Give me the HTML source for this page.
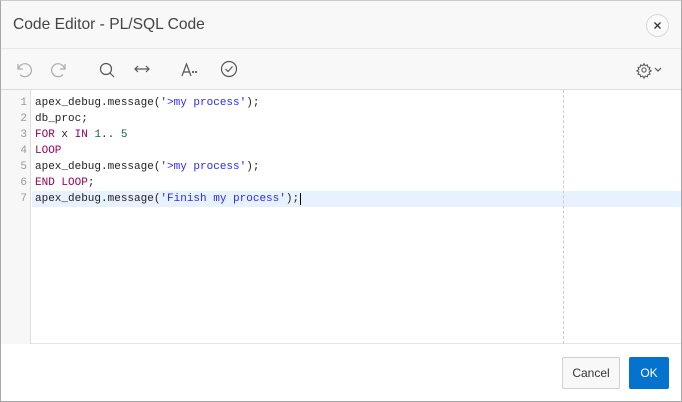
<!DOCTYPE html>
<html><head><style>
*{margin:0;padding:0;box-sizing:border-box}
body{width:682px;height:402px;background:#fff;font-family:"Liberation Sans",sans-serif;overflow:hidden;position:relative}
.frame{position:absolute;left:0;top:0;width:682px;height:402px;border:1px solid #a8a8a8;border-top-color:#ccc}
.hdr{position:absolute;left:1px;top:1px;width:680px;height:48px;background:#f8f8f8;border-bottom:1px solid #e8e8e8}
.hdr h1{position:absolute;left:12px;top:15px;font-size:15.6px;font-weight:normal;color:#444}
.close{position:absolute;left:645px;top:13px;width:23px;height:23px;border:1px solid #d8d8d8;border-radius:50%;background:#fafafa}
.tb{position:absolute;left:1px;top:49px;width:680px;height:41px;background:#f8f8f8;border-bottom:1px solid #dcdcdc}
.ed{position:absolute;left:1px;top:90px;width:680px;height:254px;background:#fff;border-bottom:1px solid #e6e6e6}
.gut{position:absolute;left:0;top:0;width:30px;height:254px;background:#f7f7f7;border-right:1px solid #ddd}
.ln{position:absolute;left:0;width:26px;text-align:right;font:11px/16px "Liberation Mono",monospace;color:#999}
.cl{position:absolute;left:34px;font:11px/16px "Liberation Mono",monospace;color:#222;white-space:pre}
.hl{position:absolute;left:31px;top:101px;width:649px;height:16px;background:#e8f2fe}
.k{color:#990055}.s{color:#2a2aff}.n{color:#116644}
.dash{position:absolute;left:562px;top:0;height:254px;border-left:1px dashed #ccc}
.btn{position:absolute;top:357px;height:32px;font-size:12px;border-radius:2px;text-align:center;line-height:30px}
</style></head><body>
<div class="hdr"><h1>Code Editor - PL/SQL Code</h1>
<div class="close"><svg width="21" height="21" viewBox="0 0 21 21"><path d="M7.5 7.5l6 6M13.5 7.5l-6 6" stroke="#333" stroke-width="1.3"/></svg></div></div>
<div class="tb">
<svg style="position:absolute;left:0;top:0" width="680" height="41" viewBox="0 0 680 41" fill="none" stroke-width="1.2">
<g stroke="#aaa"><path d="M17 15v5h5"/><path d="M17.5 20a6.5 6.5 0 1 1 1.5 5.5"/><path d="M64 15v5h-5"/><path d="M63.5 20a6.5 6.5 0 1 0 -1.5 5.5"/></g>
<g stroke="#555"><circle cx="105" cy="20" r="5.5"/><path d="M109 24l4 4"/>
<path d="M134 20h14M137 17l-3 3 3 3M145 17l3 3-3 3"/>
<path d="M181 27l4.5-12 4.5 12M182.5 23h6"/><circle cx="192" cy="23" r=".5" fill="#555"/><circle cx="195" cy="23" r=".5" fill="#555"/>
<circle cx="228" cy="20" r="7.5"/><path d="M224.5 20l2.5 2.5 4.5-5"/>
<g transform="translate(643 21) scale(.85) translate(-643 -21)"><circle cx="643" cy="21" r="2.5"/><path d="M643 13.5l1.5 2.5 2.5-1 .5 2.5 2.5.5-1 2.5 2.5 1.5-2.5 1.5 1 2.5-2.5.5-.5 2.5-2.5-1-1.5 2.5-1.5-2.5-2.5 1-.5-2.5-2.5-.5 1-2.5-2.5-1.5 2.5-1.5-1-2.5 2.5-.5.5-2.5 2.5 1z"/></g>
<path d="M654 19l3 3 3-3"/></g></svg></div>
<div class="ed">
<div class="hl"></div>
<div class="gut"></div>
<div class="dash"></div>
<div class="ln" style="top:5px">1</div><div class="ln" style="top:21px">2</div><div class="ln" style="top:37px">3</div><div class="ln" style="top:53px">4</div><div class="ln" style="top:69px">5</div><div class="ln" style="top:85px">6</div><div class="ln" style="top:101px">7</div>
<div class="cl" style="top:5px">apex_debug.message(<span class="s">'&gt;my process'</span>);</div>
<div class="cl" style="top:21px">db_proc;</div>
<div class="cl" style="top:37px"><span class="k">FOR</span> x <span class="k">IN</span> <span class="n">1</span>.. <span class="n">5</span></div>
<div class="cl" style="top:53px"><span class="k">LOOP</span></div>
<div class="cl" style="top:69px">apex_debug.message(<span class="s">'&gt;my process'</span>);</div>
<div class="cl" style="top:85px"><span class="k">END</span> <span class="k">LOOP</span>;</div>
<div class="cl" style="top:101px">apex_debug.message(<span class="s">'Finish my process'</span>);<span style="border-left:1px solid #000;margin-left:1px"></span></div>
</div>
<div class="btn" style="left:562px;width:58px;background:#f8f8f8;border:1px solid #d0d0d0;color:#333">Cancel</div>
<div class="btn" style="left:629px;width:40px;background:#0572ce;border:1px solid #0572ce;color:#fff">OK</div>
<div class="frame"></div>
</body></html>
